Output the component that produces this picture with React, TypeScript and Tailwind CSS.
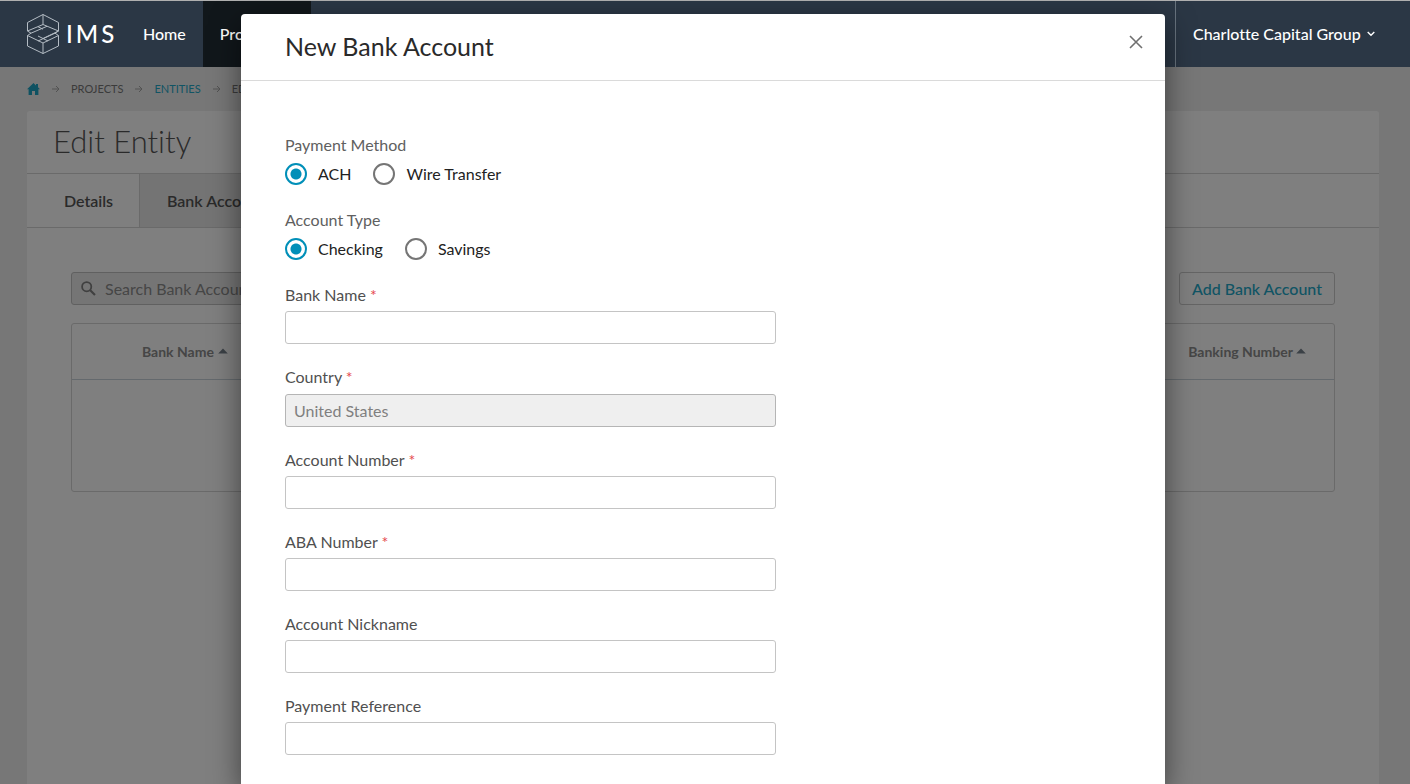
import { useState } from "react";
import type { ReactNode } from "react";

function Logo() {
  return (
    <svg width="34" height="42" viewBox="0 0 34 42" fill="none" stroke="#b4bcc4" strokeWidth="1" strokeLinejoin="round" className="shrink-0" aria-hidden="true">
      <path d="M17 1.500 32.500 9.500V18M17 1.500 1.500 9.500V18M17 1.500V11.500" />
      <path d="M1.500 18 17 11.500 32.500 18 17 25.500 12 23" />
      <path d="M1.500 18 5 20.200M5 20.200 21 13.300M12 13.700 17 16.200" />
      <path d="M5 20.200 1.500 22.500V33L17 40.500 32.500 33V22.500L29 20.200 32.500 18" />
      <path d="M1.500 22.500 17 30 32.500 22.500M17 30V40.500" />
      <path d="M29 20.200 12 28M17 25.500 22 28" />
    </svg>
  );
}

function Crumb({ children }: { children: ReactNode }) {
  return (
    <li className="flex items-center">
      <svg className="mr-[11px] ml-3" width="8" height="8" viewBox="0 0 8 8" fill="none" stroke="#a5a5a5" aria-hidden="true">
        <path d="M0 4h7M4 1l3 3-3 3" />
      </svg>
      {children}
    </li>
  );
}

function SortArrow() {
  return (
    <svg width="10" height="6" viewBox="0 0 10 6" fill="#77838d" aria-hidden="true">
      <path d="M5 .5 9.800 5.500H.2Z" />
    </svg>
  );
}

function Radio({ name, label, checked, onChange }: { name: string; label: string; checked: boolean; onChange: () => void }) {
  return (
    <label className="flex h-6 items-center gap-[11px] text-[16px] text-[#222]">
      <input
        type="radio"
        name={name}
        checked={checked}
        onChange={onChange}
        className="size-[22px] appearance-none rounded-full border-2 border-[#757575] bg-white checked:border-[#008fb8] checked:bg-[radial-gradient(circle,#008fb8_5px,#fff_6px)]"
      />
      {label}
    </label>
  );
}

function RadioGroup({ legend, name, options }: { legend: string; name: string; options: string[] }) {
  const [value, setValue] = useState(options[0]);
  return (
    <fieldset className="mb-6">
      <legend className="mb-[6px] h-[21px] text-[16px] leading-5 text-[#606060]">{legend}</legend>
      <div className="flex gap-[22px]">
        {options.map((o) => (
          <Radio key={o} name={name} label={o} checked={value === o} onChange={() => setValue(o)} />
        ))}
      </div>
    </fieldset>
  );
}

function Field({ id, label, required, value }: { id: string; label: string; required?: boolean; value?: string }) {
  return (
    <div className="mb-[23px]">
      <label htmlFor={id} className="mb-[5px] block h-[21px] text-[16px] leading-5 text-[#505050]">
        {label}
        {required && <span className="text-[#e5484d]"> *</span>}
      </label>
      <input
        id={id}
        type="text"
        defaultValue={value}
        disabled={value !== undefined}
        className="block h-[33px] w-full rounded-[3px] border border-[#c4c4c4] bg-white px-2 text-[16px] text-[#222] disabled:mt-[6px] disabled:border-[#b5b5b5] disabled:bg-[#efefef] disabled:text-[#808080]"
      />
    </div>
  );
}

export default function App() {
  return (
    <div className="relative h-screen overflow-hidden bg-[#efefef] font-['Lato','Noto_Sans',sans-serif] text-[#555] [font-variant-ligatures:none]">
      <header className="relative z-20 flex h-[67px] items-stretch border-t border-[#b0b0b0] bg-[#2b3745] text-[16px] font-medium text-white">
        <a href="#home" aria-label="IMS" className="ml-[26px] flex w-[99px] items-center gap-[6px] text-[24px] tracking-[3px]">
          <Logo />
          <span>IMS</span>
        </a>
        <nav className="flex">
          <a href="#home" className="flex items-center pr-[17px] pl-[18px]">Home</a>
          <a href="#projects" className="flex w-[108px] items-center bg-[#11171b] pl-[17px]">Projects</a>
        </nav>
        <button type="button" className="ml-auto flex w-[235px] items-center gap-[6px] border-l border-[#68737e] pl-[17px]">
          Charlotte Capital Group
          <svg width="8" height="6" viewBox="0 0 8 6" fill="none" stroke="white" strokeWidth="1.400" aria-hidden="true">
            <path d="m.7 1 3.300 3.300L7.300 1" />
          </svg>
        </button>
      </header>

      <nav aria-label="Breadcrumb" className="flex h-11 items-center pl-[27px] text-[11px] text-[#777]">
        <a href="#home" aria-label="Home">
          <svg width="13" height="12" viewBox="0 0 13 12" fill="#1fa5c4" aria-hidden="true">
            <path d="M6.500 0 9 2.400V1h2v3.200L13 6.300h-1.600V12H8V8H5v4H1.600V6.300H0Z" />
          </svg>
        </a>
        <ol className="flex">
          <Crumb>PROJECTS</Crumb>
          <Crumb><a href="#entities" className="text-[#22a8c8]">ENTITIES</a></Crumb>
          <Crumb>EDIT ENTITY</Crumb>
        </ol>
      </nav>

      <main className="mr-[31px] ml-[27px] min-h-screen rounded-t-[3px] bg-white">
        <h1 className="flex h-[63px] items-center border-b border-[#d4d4d4] pb-[2px] pl-[26px] text-[31px] font-light">Edit Entity</h1>
        <div role="tablist" className="flex h-[54px] border-b border-[#d4d4d4] text-[16px] font-semibold">
          <button type="button" role="tab" aria-selected="false" className="w-[113px] border-r border-[#d4d4d4] pl-[11px]">Details</button>
          <button type="button" role="tab" aria-selected="true" className="bg-[#e9e9e9] px-[27px]">Bank Accounts</button>
        </div>
        <div className="px-11 pt-11">
          <div className="mb-[18px] flex h-[33px] justify-between">
            <label className="flex w-[300px] items-center gap-[9px] rounded-[3px] border border-[#c0c0c0] bg-[#ebebeb] px-[9px]">
              <svg width="15" height="15" viewBox="0 0 15 15" fill="none" stroke="#808080" strokeWidth="1.800" className="shrink-0" aria-hidden="true">
                <circle cx="5.700" cy="5.700" r="4.600" />
                <path d="m9 9 5 5" strokeWidth="2.200" />
              </svg>
              <input type="search" aria-label="Search Bank Accounts" placeholder="Search Bank Accounts" className="w-full bg-transparent text-[16px] outline-none placeholder:text-[#8c8c8c]" />
            </label>
            <button type="button" className="rounded-[3px] border border-[#cacaca] px-3 text-[16px] font-medium text-[#22a8c8]">Add Bank Account</button>
          </div>
          <div className="h-[169px] overflow-hidden rounded-[3px] border border-[#d4d4d4]">
            <table className="w-full text-[14px] text-[#8c8c8c]">
              <thead>
                <tr className="h-[55px] border-b border-[#c8d3da]">
                  <th className="p-0 pl-[70px] text-left"><span className="inline-flex items-center gap-1">Bank Name <SortArrow /></span></th>
                  <th className="p-0 pr-7 text-right"><span className="inline-flex items-center gap-[3px]">Banking Number <SortArrow /></span></th>
                </tr>
              </thead>
            </table>
          </div>
        </div>
      </main>

      <div className="absolute inset-x-0 top-[67px] bottom-0 z-10 bg-black/50" />

      <div className="absolute inset-x-0 top-[14px] bottom-0 z-30 flex justify-center pr-1">
        <section role="dialog" aria-modal="true" aria-labelledby="dialog-title" className="w-[924px] rounded-t-[4px] bg-white shadow-[0_10px_30px_rgba(0,0,0,0.5)]">
          <div className="flex h-[67px] items-center justify-between border-b border-[#dadada] pr-[22px] pl-11">
            <h2 id="dialog-title" className="text-[25px] text-[#2a2a2a]">New Bank Account</h2>
            <button type="button" aria-label="Close" className="mb-[11px]">
              <svg width="14" height="14" viewBox="0 0 14 14" fill="none" stroke="#707070" strokeWidth="1.600" aria-hidden="true">
                <path d="m1 1 12 12M13 1 1 13" />
              </svg>
            </button>
          </div>
          <form className="w-[535px] pt-[54px] pl-11">
            <RadioGroup legend="Payment Method" name="method" options={["ACH", "Wire Transfer"]} />
            <RadioGroup legend="Account Type" name="type" options={["Checking", "Savings"]} />
            <Field id="bank" label="Bank Name" required />
            <Field id="country" label="Country" required value="United States" />
            <Field id="account" label="Account Number" required />
            <Field id="aba" label="ABA Number" required />
            <Field id="nickname" label="Account Nickname" />
            <Field id="reference" label="Payment Reference" />
          </form>
        </section>
      </div>
    </div>
  );
}
